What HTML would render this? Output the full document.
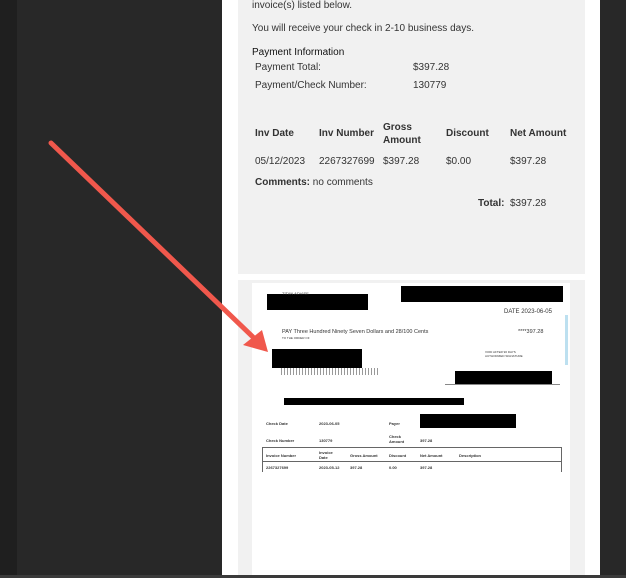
<!DOCTYPE html>
<html><head><meta charset="utf-8"><style>
*{margin:0;padding:0;box-sizing:border-box}
body{width:626px;height:578px;overflow:hidden;background:#282828;position:relative;font-family:"Liberation Sans",Arial,sans-serif;color:#333}
.a{position:absolute;white-space:nowrap}
.t{font-size:10px;color:#333}
.b{font-weight:bold}
.k{position:absolute;background:#000}
.s{position:absolute;font-size:4px;color:#333;white-space:nowrap;font-weight:bold}
</style></head><body>
<div class="a" style="left:0;top:0;width:17px;height:578px;background:#1f1f1f"></div>
<div class="a" style="left:222px;top:0;width:378px;height:578px;background:#fff"></div>
<div class="a" style="left:238px;top:0;width:347px;height:274px;background:#f1f1f1"></div>
<div class="a" style="left:238px;top:280px;width:347px;height:298px;background:#f1f1f1"></div>
<div class="a" style="left:252px;top:283px;width:318px;height:295px;background:#fff"></div>
<div class="a" style="left:0;top:575px;width:626px;height:3px;background:#3a3a3a"></div>

<div class="a t" style="left:252px;top:0px">invoice(s) listed below.</div>
<div class="a t" style="left:252px;top:23px">You will receive your check in 2-10 business days.</div>
<div class="a t" style="left:252px;top:47px;color:#111">Payment Information</div>
<div class="a t" style="left:255px;top:62px">Payment Total:</div>
<div class="a t" style="left:413px;top:62px">$397.28</div>
<div class="a t" style="left:255px;top:80px">Payment/Check Number:</div>
<div class="a t" style="left:413px;top:80px">130779</div>
<div class="a t b" style="left:255px;top:128px">Inv Date</div>
<div class="a t b" style="left:319px;top:128px">Inv Number</div>
<div class="a t b" style="left:383px;top:121px;line-height:13px">Gross<br>Amount</div>
<div class="a t b" style="left:446px;top:128px">Discount</div>
<div class="a t b" style="left:510px;top:128px">Net Amount</div>
<div class="a t" style="left:255px;top:156px">05/12/2023</div>
<div class="a t" style="left:319px;top:156px">2267327699</div>
<div class="a t" style="left:383px;top:156px">$397.28</div>
<div class="a t" style="left:446px;top:156px">$0.00</div>
<div class="a t" style="left:510px;top:156px">$397.28</div>
<div class="a t" style="left:255px;top:177px"><b>Comments:</b> no comments</div>
<div class="a t b" style="left:478px;top:198px">Total:</div>
<div class="a t" style="left:510px;top:198px">$397.28</div>

<div class="k" style="left:267px;top:294px;width:101px;height:16px"></div>
<div class="k" style="left:401px;top:286px;width:162px;height:16px"></div>
<div class="k" style="left:272px;top:349px;width:90px;height:19px"></div>
<div class="k" style="left:455px;top:371px;width:97px;height:13px"></div>
<div class="k" style="left:284px;top:398px;width:180px;height:7px"></div>
<div class="k" style="left:420px;top:414px;width:96px;height:14px"></div>
<div class="s" style="left:282px;top:291px;font-weight:normal">TITAN ADVISE</div>
<div class="a" style="left:504px;top:309px;font-size:6px">DATE 2023-06-05</div>
<div class="a" style="left:282px;top:329px;font-size:5.5px">PAY Three Hundred Ninety Seven Dollars and 28/100 Cents</div>
<div class="s" style="left:282px;top:336px;font-weight:normal;font-size:3px">TO THE ORDER OF</div>
<div class="a" style="left:518px;top:329px;font-size:5.5px">****397.28</div>
<div class="s" style="left:485px;top:350px;font-weight:normal;font-size:3px">VOID AFTER 90 DAYS<br>AUTHORIZED SIGNATURE</div>
<div class="a" style="left:565px;top:315px;width:3px;height:50px;background:#bde0f0"></div>
<div class="a" style="left:281px;top:368px;width:98px;height:7px;background:repeating-linear-gradient(90deg,#999 0 1px,#fff 1px 3px)"></div>
<div class="a" style="left:445px;top:384px;width:115px;height:1px;background:#888"></div>
<div class="s" style="left:266px;top:421px">Check Date</div>
<div class="s" style="left:319px;top:421px">2023-06-05</div>
<div class="s" style="left:389px;top:421px">Payer</div>
<div class="s" style="left:266px;top:438px">Check Number</div>
<div class="s" style="left:319px;top:438px">130779</div>
<div class="s" style="left:389px;top:434px">Check<br>Amount</div>
<div class="s" style="left:420px;top:438px">397.28</div>
<div class="a" style="left:262px;top:447px;width:300px;height:25px;border:1px solid #666;border-bottom:none"></div>
<div class="a" style="left:262px;top:461px;width:300px;height:1px;background:#666"></div>
<div class="s" style="left:266px;top:453px">Invoice Number</div>
<div class="s" style="left:319px;top:450px">Invoice<br>Date</div>
<div class="s" style="left:350px;top:453px">Gross Amount</div>
<div class="s" style="left:389px;top:453px">Discount</div>
<div class="s" style="left:420px;top:453px">Net Amount</div>
<div class="s" style="left:459px;top:453px">Description</div>
<div class="s" style="left:266px;top:465px">2267327699</div>
<div class="s" style="left:319px;top:465px">2023-05-12</div>
<div class="s" style="left:350px;top:465px">397.28</div>
<div class="s" style="left:389px;top:465px">0.00</div>
<div class="s" style="left:420px;top:465px">397.28</div>

<svg class="a" style="left:0;top:0" width="626" height="578">
<line x1="51" y1="143" x2="255" y2="339" stroke="#f0584c" stroke-width="5" stroke-linecap="round"/>
<polygon points="268,352 243,345 262,330" fill="#f0584c"/>
</svg>
</body></html>
